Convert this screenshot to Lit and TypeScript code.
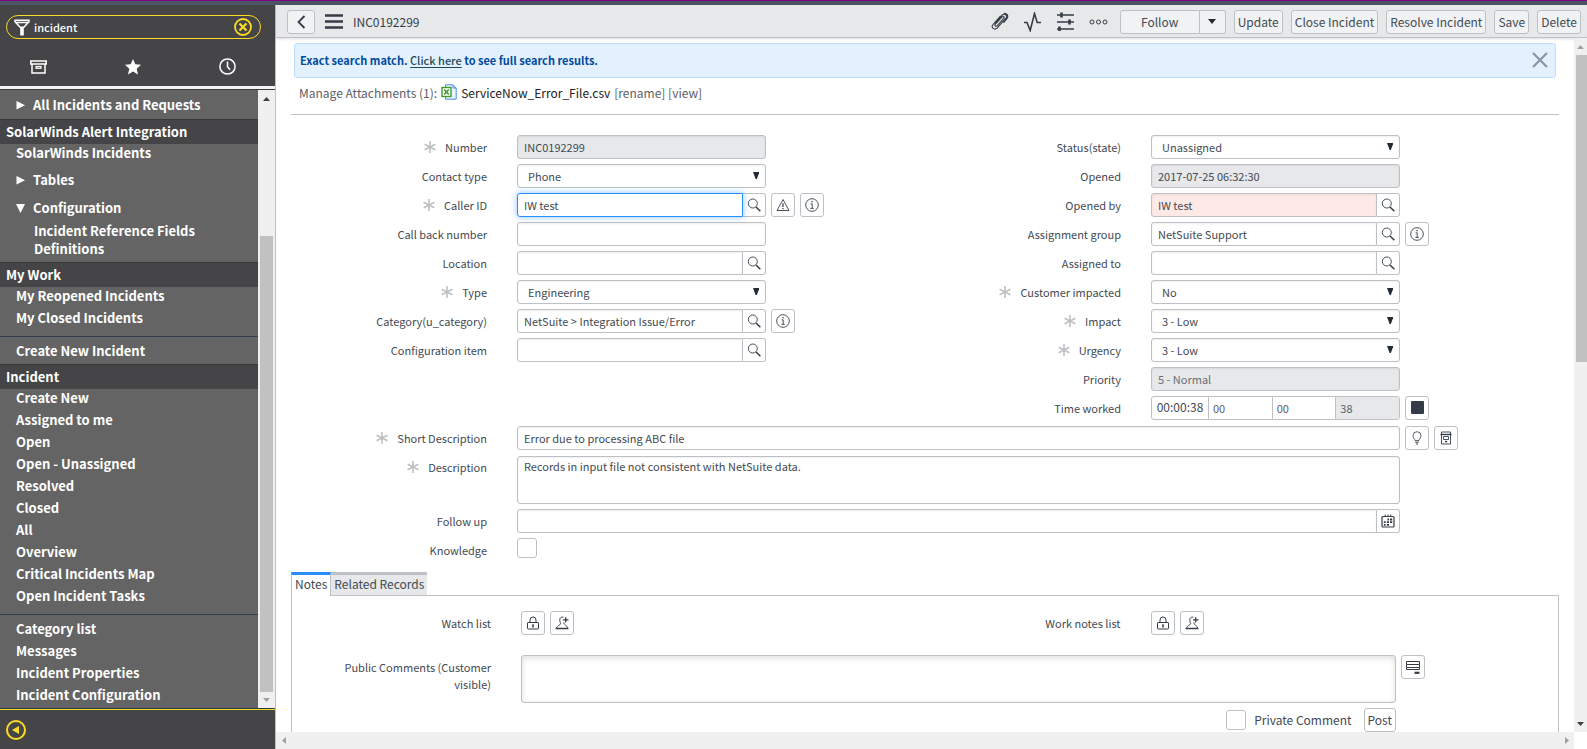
import { LitElement, html, css, svg, nothing, TemplateResult } from "lit";
import { customElement } from "lit/decorators.js";
import { classMap } from "lit/directives/class-map.js";

const base = css`
  *, *::before, *::after { box-sizing: border-box; }
  button, input, select, textarea { font: inherit; color: inherit; margin: 0; }
  svg { display: block; flex: none; }
  a { color: inherit; text-decoration: none; }
`;

const icon = (w: number, h: number, body: TemplateResult) => html`
  <svg width=${w} height=${h} viewBox="0 0 ${w} ${h}" fill="none" stroke="currentColor" aria-hidden="true">${body}</svg>`;

const icons: Record<string, () => TemplateResult> = {
  search: () => icon(14, 14, svg`<circle cx="5.800" cy="5.500" r="4.500" stroke-width=".9"/><path d="M9 9l4.400 4.200" stroke-width="1.500"/>`),
  info: () => icon(14, 14, svg`<circle cx="7" cy="7" r="6.300" stroke-width=".9"/><path d="M5.600 5.800h1.600v4.400M5.400 10.400h3.400" stroke-width=".9"/><path d="M6.400 3.600h1.300" stroke-width="1.400"/>`),
  warn: () => icon(14, 14, svg`<path d="M7 1.500L13 12.500H1z" stroke-width=".9"/><path d="M7 5.200v3.800M7 9.900v1.300" stroke-width="1.200"/>`),
  stop: () => icon(14, 14, svg`<rect x="1" y="0" width="13" height="13" rx="1" fill="currentColor" stroke="none"/>`),
  bulb: () => icon(14, 14, svg`<path d="M5 9.500C5 8 3 6.900 3 4.700a4 4 0 0 1 8 0C11 6.900 9 8 9 9.500z" stroke-width=".8"/><path d="M5.200 11.200h3.600M6 13h2"/>`),
  kb: () => icon(14, 14, svg`<path d="M2.500 1h9v2.500h-9zM2.500 4v9h9v-9" stroke-width=".9"/><path d="M1.500 3.500h11" stroke-width="1.400"/><path d="M4.500 5.500h5v3h-5z" stroke-width=".9"/><path d="M6 10.600h2.200" stroke-width="1.500"/>`),
  calendar: () => icon(14, 14, svg`<rect x="1" y="2.500" width="12" height="10.500" rx="1" stroke-width="1.200"/><path d="M4.200 .5v2.500M7 .5v2.500M9.800 .5v2.500"/><path d="M6.500 5.500h1.600M9 5.500h2.200M2.800 8.200h1.800M5.800 8.200h2.200M9 8.200h2.200M2.800 10.800h1.800M5.800 10.800h2.200" stroke-width="1.800"/>`),
  lock: () => icon(14, 14, svg`<rect x="1.500" y="6.500" width="11" height="6.500" rx=".6"/><path d="M4 6.300V4a3 3 0 0 1 6 0v2.300"/><path d="M7 8.200v3.200" stroke-width="1.600"/>`),
  adduser: () => icon(14, 14, svg`<path d="M8.500 1.200C6.200 .6 4.600 2 4.700 4.200c.1 1.600.9 2.600 1 3.600 0 1.200-4 1.600-4.400 4.700" stroke-width=".9"/><path d="M8.700 6.500c.1 2.600 3.700 2.700 4.100 6" stroke-width=".9"/><path d="M.6 12.500h12.800" stroke-width="1.500"/><path d="M10.700 1.300v5.200M8 3.900h5.500" stroke-width="1.300"/>`),
  template: () => icon(14, 14, svg`<path d="M.5 1.500h13v3H.5zM.5 7.500h13v2H.5zM.5 4.500v3M13.500 4.500v3"/><path d="M8.500 12.800h5" stroke-width="2.200"/>`),
};

const star = icon(12, 12, svg`<path d="M6 0v12M.6 3.200l10.800 5.600M.6 8.800l10.800-5.600" stroke-width="1.600"/>`);

type Row = { head?: string; group?: string; open?: boolean; item?: string; nested?: boolean; rule?: boolean };

const NAV: Row[] = [
  { group: "All Incidents and Requests" },
  { head: "SolarWinds Alert Integration" },
  { item: "SolarWinds Incidents" },
  { group: "Tables" },
  { group: "Configuration", open: true },
  { item: "Incident Reference Fields Definitions", nested: true },
  { head: "My Work" },
  { item: "My Reopened Incidents" },
  { item: "My Closed Incidents" },
  { rule: true },
  { item: "Create New Incident" },
  { head: "Incident" },
  ...["Create New", "Assigned to me", "Open", "Open - Unassigned", "Resolved", "Closed", "All",
    "Overview", "Critical Incidents Map", "Open Incident Tasks"].map((item) => ({ item })),
  { rule: true },
  ...["Category list", "Messages", "Incident Properties", "Incident Configuration"].map((item) => ({ item })),
];

@customElement("app-nav")
class AppNav extends LitElement {
  static styles = [base, css`
    :host {
      display: flex; flex-direction: column; width: 275px; flex: none; min-height: 0;
      background: #454547; color: #fff; font-weight: 700; font-size: 13px;
    }
    .top { height: 81px; padding: 10px 14px 0 6px; }
    .filter {
      display: flex; align-items: center; height: 24px; padding: 0 8px 0 7px; gap: 4px;
      border: 1px solid #fddc26; border-radius: 12px;
    }
    .filter input {
      flex: 1; min-width: 0; border: 0; padding: 0; outline: 0; background: none;
      font-size: 11px; font-weight: 500; line-height: 20px;
    }
    .plain { border: 0; padding: 0; background: none; color: inherit; cursor: pointer; }
    .clear, .collapse { color: #fddc26; }
    .views { display: flex; justify-content: space-between; align-items: center; padding: 19px 25px 0 24px; }
    .band { height: 4px; background: #f4f4f4; border-bottom: 1px solid #38383a; }
    .body { display: flex; flex: 1; min-height: 0; border-bottom: 1px solid #343d47; }
    .list { flex: 1; overflow: hidden; background: #646464; padding-top: 1px; }
    .head {
      height: 25px; padding-left: 6px; line-height: 23px; font-size: 13px; font-weight: 700;
      background: #454547; border-top: 1px solid #38383a; margin: 0;
    }
    .item { display: block; padding: 0 50px 4px 16px; line-height: 18px; }
    .nested { padding-left: 34px; }
    .group {
      display: flex; align-items: center; gap: 8px; width: 100%; height: 28px; padding: 0 0 1px 16px;
      border: 0; background: none; color: inherit; text-align: left; font-weight: 700;
    }
    .rule { height: 11px; border: 0; margin: 0; padding: 5px 0; }
    .rule::before { content: ""; display: block; height: 1px; background: #343d4f; }
    .bar { width: 17px; background: #f0f0f0; display: flex; flex-direction: column; align-items: center; padding: 7px 0 6px; }
    .gap { flex: 135; }
    .thumb { width: 13px; flex: 456; background: #c1c1c1; margin-bottom: 6px; }
    .foot { height: 40px; border-top: 1px solid #fddc26; padding: 10px 6px; }
  `];

  row(r: Row) {
    if (r.rule) return html`<hr class="rule">`;
    if (r.head) return html`<h2 class="head">${r.head}</h2>`;
    if (r.group) return html`<button class="group" aria-expanded=${r.open ? "true" : "false"}>
      ${icon(9, 10, r.open
        ? svg`<path d="M0 1h9L4.500 10z" fill="currentColor" stroke="none"/>`
        : svg`<path d="M.5 1L9 5.200.5 9.500z" fill="currentColor" stroke="none"/>`)}
      <span>${r.group}</span></button>`;
    return html`<a href="#" class=${classMap({ item: true, nested: !!r.nested })}>${r.item}</a>`;
  }

  render() {
    return html`
      <div class="top">
        <div class="filter">
          ${icon(16, 17, svg`<path d="M1 1.200h14v1.600L9.800 8.200H6.200L1 2.800zM1.500 3.500h13" stroke-width="1.500"/><path d="M8 9v7.500" stroke-width="3.600"/>`)}
          <input aria-label="Filter navigator" .value=${"incident"}>
          <button class="plain clear" aria-label="Clear filter">
            ${icon(18, 18, svg`<circle cx="9" cy="9" r="8" stroke-width="1.800"/><path d="M5.500 5.500l7 7M12.500 5.500l-7 7" stroke-width="2.200"/>`)}
          </button>
        </div>
        <div class="views">
          <button class="plain" aria-label="All applications">
            ${icon(17, 14, svg`<path d="M.8 1h15.400v3H.8zM2 4v9h13V4" stroke-width="1.500"/><rect x="6" y="6.500" width="5" height="1.800" stroke-width="1.200"/>`)}
          </button>
          <button class="plain" aria-label="Favorites">
            ${icon(16, 16, svg`<path d="M8 0l2.300 5.300 5.700.5-4.300 3.900 1.300 5.800L8 12.500l-5 3 1.300-5.800L0 5.800l5.700-.5z" fill="currentColor" stroke="none"/>`)}
          </button>
          <button class="plain" aria-label="History">
            ${icon(17, 17, svg`<circle cx="8.500" cy="8.500" r="7.600" stroke-width="1.500"/><path d="M8.500 3.500v5.200l2.600 3" stroke-width="1.500"/>`)}
          </button>
        </div>
      </div>
      <div class="band"></div>
      <div class="body">
        <nav class="list">${NAV.map((r) => this.row(r))}</nav>
        <div class="bar">
          ${icon(7, 4, svg`<path d="M0 4h7L3.500 0z" fill="#404040" stroke="none"/>`)}
          <div class="gap"></div><div class="thumb"></div>
          ${icon(7, 4, svg`<path d="M0 0h7L3.500 4z" fill="#a0a0a0" stroke="none"/>`)}
        </div>
      </div>
      <div class="foot">
        <button class="plain collapse" aria-label="Collapse navigator">
          ${icon(20, 20, svg`<circle cx="10" cy="10" r="9" stroke-width="2"/><path d="M6 10l7-4v8z" fill="currentColor" stroke="none"/>`)}
        </button>
      </div>`;
  }
}

type Field = {
  id: string; label: string; value?: string; kind?: "text" | "select" | "ref" | "timer" | "area" | "date" | "check";
  req?: boolean; ro?: boolean; tone?: string; extra?: string[];
};

const LEFT: Field[] = [
  { id: "number", label: "Number", value: "INC0192299", ro: true, req: true },
  { id: "contact", label: "Contact type", value: "Phone", kind: "select" },
  { id: "caller", label: "Caller ID", value: "IW test", kind: "ref", req: true, tone: "focus", extra: ["warn", "info"] },
  { id: "callback", label: "Call back number" },
  { id: "location", label: "Location", kind: "ref" },
  { id: "type", label: "Type", value: "Engineering", kind: "select", req: true },
  { id: "category", label: "Category(u_category)", value: "NetSuite > Integration Issue/Error", kind: "ref", extra: ["info"] },
  { id: "ci", label: "Configuration item", kind: "ref" },
];

const RIGHT: Field[] = [
  { id: "state", label: "Status(state)", value: "Unassigned", kind: "select" },
  { id: "opened", label: "Opened", value: "2017-07-25 06:32:30", ro: true },
  { id: "openedby", label: "Opened by", value: "IW test", kind: "ref", tone: "pink" },
  { id: "group", label: "Assignment group", value: "NetSuite Support", kind: "ref", extra: ["info"] },
  { id: "assigned", label: "Assigned to", kind: "ref" },
  { id: "impacted", label: "Customer impacted", value: "No", kind: "select", req: true },
  { id: "impact", label: "Impact", value: "3 - Low", kind: "select", req: true },
  { id: "urgency", label: "Urgency", value: "3 - Low", kind: "select", req: true },
  { id: "priority", label: "Priority", value: "5 - Normal", ro: true, tone: "dim" },
  { id: "time", label: "Time worked", kind: "timer", extra: ["stop"] },
];

const WIDE: Field[] = [
  { id: "short", label: "Short Description", value: "Error due to processing ABC file", req: true, extra: ["bulb", "kb"] },
  { id: "desc", label: "Description", value: "Records in input file not consistent with NetSuite data.", kind: "area", req: true },
  { id: "follow", label: "Follow up", kind: "date" },
  { id: "knowledge", label: "Knowledge", kind: "check" },
];

@customElement("app-record")
class AppRecord extends LitElement {
  static styles = [base, css`
    :host {
      display: flex; flex-direction: column; flex: 1; min-width: 0; min-height: 0;
      border-left: 1px solid #bdc0c4; background: #fff; color: #434a52; font-size: 11px;
    }
    .bar {
      display: flex; align-items: center; height: 33px; padding: 1px 6px 0 11px; flex: none;
      background: #e6e8ea; border-bottom: 1px solid #bdc0c4; box-shadow: 0 1px 3px #0002; color: #343d47;
    }
    .btn {
      height: 24px; padding: 0 3px; border: 1px solid #bdc0c4; border-radius: 3px;
      background: #f0f2f3; color: #434a52; font-size: 12px; line-height: 20px; white-space: nowrap;
    }
    .back { width: 28px; display: grid; place-items: center; color: #343d47; }
    .menu { margin: 0 10px; }
    .title { font-size: 12px; font-weight: 400; line-height: 20px; margin: 0; flex: 1; }
    .tools { display: flex; gap: 14px; align-items: center; margin-right: 12px; }
    .tool { border: 0; background: none; padding: 0; color: #343d47; }
    .actions { display: flex; gap: 8px; }
    .split { display: flex; }
    .follow { width: 80px; border-radius: 3px 0 0 3px; }
    .drop { width: 26px; border-left: 0; border-radius: 0 3px 3px 0; display: grid; place-items: center; }
    .scroll { display: grid; grid-template: minmax(0, 1fr) 17px / minmax(0, 1fr) 13px; flex: 1; min-height: 0; }
    .page { overflow: hidden; padding: 5px 15px 0; }
    .alert {
      display: flex; justify-content: space-between; align-items: center; height: 35px; margin: 0 3px;
      padding: 0 7px 2px 5px; border: 1px solid #bedcff; border-radius: 3px; background: #e3f1ff;
      color: #004b9c; font-weight: 700;
    }
    .alert a { color: #1f4a57; text-decoration: underline; text-underline-offset: 2px; font-weight: 500; }
    .close { border: 0; background: none; padding: 0; color: #8994a0; }
    .files {
      display: flex; align-items: center; gap: 4px; height: 37px; padding: 0 8px 8px; font-size: 12px;
      border-bottom: 1px solid #bdc0c9; color: #5c6066;
    }
    .files .name { color: #222; }
    .form { padding-top: 20px; }
    .cols { display: grid; grid-template-columns: 1fr 1fr; }
    .col { display: grid; gap: 5px; align-content: start; }
    .wide { display: grid; gap: 5px; padding-top: 6px; }
    .row { display: grid; grid-template-columns: 196px minmax(0, 1fr) 159px; min-height: 24px; }
    .row > label, .row > .label {
      display: flex; justify-content: flex-end; align-items: center; gap: 9px; height: 24px; text-align: right;
    }
    .row > label > svg { color: #bdc0c4; }
    .ctl { display: flex; margin-left: 30px; }
    .extra { display: flex; gap: 5px; padding-left: 5px; }
    .in {
      flex: 1; min-width: 0; width: 100%; height: 24px; padding: 0 6px; border: 1px solid #bdc0c4; border-radius: 3px;
      background: #fff; box-shadow: inset 0 1px 2px #0001; outline: 0; line-height: 20px;
    }
    .in.ro { background: #e6e8ea; }
    .in.dim { color: #6b7078; }
    .in.ref { border-radius: 3px 0 0 3px; }
    .in.focus { border-color: #278efc; box-shadow: 0 0 6px #278efc88; position: relative; border-radius: 3px 0 0 3px; }
    .in.pink { background: #ffe9e7; }
    select.in { appearance: none; padding: 0 10px; grid-area: 1 / 1; }
    .pick { display: grid; flex: 1; min-width: 0; align-items: center; }
    .pick svg { grid-area: 1 / 1; justify-self: end; margin: 0 7px 2px 0; color: #222b34; pointer-events: none; }
    textarea.in { height: 48px; display: block; resize: none; padding: 0 6px; line-height: 18px; }
    .wide textarea { margin-top: 1px; }
    .sq {
      width: 24px; height: 24px; flex: none; display: grid; place-items: center; padding: 0;
      border: 1px solid #bdc0c4; border-radius: 3px; background: #fff; color: #343d47;
    }
    .sq.join { border-left: 0; border-radius: 0 3px 3px 0; width: 23px; }
    .timer { display: flex; flex: 1; min-width: 0; height: 24px; border: 1px solid #bdc0c4; border-radius: 3px; overflow: hidden; }
    .clock { width: 56px; text-align: center; line-height: 20px; flex: none; font-size: 12px; }
    .timer input {
      flex: 1; min-width: 0; border: 0; border-left: 1px solid #bdc0c4; border-radius: 0; outline: 0;
      padding: 0 4px; line-height: 20px; color: #5c6066; background: #fff;
    }
    .timer input[readonly] { background: #e6e8ea; }
    .check {
      appearance: none; width: 20px; height: 20px; margin: 0; border: 1px solid #bdc0c4; border-radius: 3px; background: #fff;
    }
    .tabs { display: flex; padding-top: 10px; height: 33px; font-size: 12px; }
    .tab {
      border: 0; padding: 0 3px; line-height: 18px; background: #e6e8ea; border-top: 3px solid #bdc0c9;
      height: 23px; white-space: nowrap; display: flex; align-items: flex-start;
    }
    .tab.on {
      background: #fff; border-top-color: #278efc; border-left: 1px solid #bdc0c4; border-right: 1px solid #bdc0c4;
      height: 24px; position: relative;
    }
    .pane { border: 1px solid #bdc0c4; padding: 15px 3px 40px 4px; height: 260px; }
    .pane .row { grid-template-columns: 195px minmax(0, 1fr) 159px; }
    .pair { display: flex; gap: 5px; margin-left: 30px; }
    .comments { margin-top: 20px; }
    .row > label.long { display: block; height: auto; padding: 4px 0 0 36px; line-height: 17px; }
    .comments .in { box-shadow: inset 0 2px 6px #0002; }
    .post { display: flex; justify-content: flex-end; align-items: center; gap: 8px; padding: 5px 159px 0 0; font-size: 12px; }
    .post label { line-height: 20px; margin-right: 4px; }
    .post .btn { background: #fff; }
    .vbar { background: #f0f0f0; display: flex; flex-direction: column; align-items: center; padding: 7px 0 6px; }
    .thumb { align-self: stretch; margin: 6px 0 0 2px; background: #c1c1c1; flex: 306; }
    .rest { flex: 358; }
    .hbar { background: #f0f0f0; display: flex; justify-content: space-between; align-items: center; padding: 0 5px 0 6px; }
  `];

  button(name: string, label: string, cls = "sq") {
    return html`<button class=${cls} aria-label=${label}>${icons[name]()}</button>`;
  }

  control(f: Field) {
    const v = f.value ?? "";
    if (f.kind === "select") return html`<div class="pick">
      <select class="in" id=${f.id}><option>${v}</option></select>
      ${icon(6, 7, svg`<path d="M0 0h6.500L3.800 7H2.600z" fill="currentColor" stroke="none"/>`)}</div>`;
    if (f.kind === "area") return html`<textarea class="in" id=${f.id} .value=${v}></textarea>`;
    if (f.kind === "check") return html`<input class="check" type="checkbox" id=${f.id}>`;
    if (f.kind === "timer") return html`<div class="timer">
      <span class="clock">00:00:38</span>
      <input id=${f.id} aria-label="Hours" .value=${"00"}>
      <input aria-label="Minutes" .value=${"00"}>
      <input aria-label="Seconds" readonly .value=${"38"}></div>`;
    const joined = f.kind === "ref" || f.kind === "date";
    return html`
      <input id=${f.id} ?readonly=${!!f.ro} .value=${v}
        class=${classMap({ in: true, ro: !!f.ro, ref: joined, focus: f.tone === "focus", pink: f.tone === "pink", dim: f.tone === "dim" })}>
      ${joined ? this.button(f.kind === "date" ? "calendar" : "search", `Look up ${f.label}`, "sq join") : nothing}`;
  }

  field(f: Field) {
    return html`<div class="row">
      <label for=${f.id}>${f.req ? star : nothing}<span>${f.label}</span></label>
      <div class="ctl">${this.control(f)}</div>
      <div class="extra">${(f.extra ?? []).map((e) => this.button(e, `${f.label} ${e}`))}</div>
    </div>`;
  }

  people(label: string) {
    return html`<div class="row"><span class="label">${label}</span>
      <div class="pair">${this.button("lock", `Unlock ${label}`)}${this.button("adduser", `Add me to ${label}`)}</div></div>`;
  }

  render() {
    return html`
      <header class="bar">
        <button class="btn back" aria-label="Back">${icon(9, 14, svg`<path d="M7.500 1L1.500 7l6 6" stroke-width="1.800"/>`)}</button>
        <button class="tool menu" aria-label="Menu">${icon(18, 15, svg`<path d="M0 1.500h18M0 7.500h18M0 13.500h18" stroke-width="2.600"/>`)}</button>
        <h1 class="title">INC0192299</h1>
        <div class="tools">
          <button class="tool" aria-label="Attachments">${icon(19, 19, svg`<path d="M5 12.600L12 5c1.200-1.200 2.800 0 1.700 1.400l-6.600 7.500M4.600 11.400L12.400 3c2.200-2.200 5.600.4 3.500 3.100l-8.600 9.700c-2.900 2.900-6.700-.2-4.300-3.300l7.600-8.700M5 12.600c-.6 1.300 1 2.200 2.100 1.300M14 1.300c2.600-.3 4.800 2.300 3.200 4.900l-3.700 4.600" stroke-width="1.100"/>`)}</button>
          <button class="tool" aria-label="Activity">${icon(19, 20, svg`<path d="M1 10.500h3l3.200 8L11.500 1.500l2.700 9H18" stroke-width="1.600"/>`)}</button>
          <button class="tool" aria-label="Personalize">${icon(19, 19, svg`<path d="M1 3h17M1 10h17M1 17h17" stroke-width="1.500"/><path d="M5.500 .5v5M13.500 7.500v5M3.500 14.500v5" stroke-width="2.600"/>`)}</button>
          <button class="tool" aria-label="More">${icon(19, 6, svg`<circle cx="3" cy="3" r="2"/><circle cx="9.500" cy="3" r="2"/><circle cx="16" cy="3" r="2"/>`)}</button>
        </div>
        <div class="actions">
          <div class="split"><button class="btn follow">Follow</button>
            <button class="btn drop" aria-label="Follow options">${icon(8, 5, svg`<path d="M0 0h8L4 5z" fill="#222b34" stroke="none"/>`)}</button></div>
          ${["Update", "Close Incident", "Resolve Incident", "Save", "Delete"].map((t) => html`<button class="btn">${t}</button>`)}
        </div>
      </header>
      <div class="scroll">
        <main class="page">
          <div class="alert">
            <span>Exact search match. <a href="#">Click here</a> to see full search results.</span>
            <button class="close" aria-label="Dismiss">${icon(16, 16, svg`<path d="M1 1l14 14M15 1L1 15" stroke-width="2.200"/>`)}</button>
          </div>
          <div class="files">
            <span>Manage Attachments (1):</span>
            ${icon(16, 16, svg`<path d="M4.500 3V.8h7.500l3.200 3.200v11.200H4.500V13" stroke="#4a8be0" fill="#eef4fc"/><path d="M12 1v3h3" stroke="#4a8be0"/><rect x="1" y="3.500" width="9" height="9" fill="#fff" stroke="#3f9a2f" stroke-width="1.400"/><path d="M3.200 5.500l4.600 5M7.800 5.500l-4.600 5" stroke="#3f9a2f" stroke-width="1.600"/>`)}
            <a class="name" href="#">ServiceNow_Error_File.csv</a>
            <span><a href="#">[rename]</a> <a href="#">[view]</a></span>
          </div>
          <form class="form" @submit=${(e: Event) => e.preventDefault()}>
            <div class="cols">
              <div class="col">${LEFT.map((f) => this.field(f))}</div>
              <div class="col">${RIGHT.map((f) => this.field(f))}</div>
            </div>
            <div class="wide">${WIDE.map((f) => this.field(f))}</div>
          </form>
          <div class="tabs" role="tablist">
            <button class="tab on" role="tab" aria-selected="true">Notes</button>
            <button class="tab" role="tab" aria-selected="false">Related Records</button>
          </div>
          <section class="pane">
            <div class="cols">${this.people("Watch list")}${this.people("Work notes list")}</div>
            <div class="row comments">
              <label class="long" for="comments">Public Comments (Customer visible)</label>
              <div class="ctl"><textarea class="in" id="comments"></textarea></div>
              <div class="extra">${this.button("template", "Comment templates")}</div>
            </div>
            <div class="post">
              <input class="check" type="checkbox" id="private"><label for="private">Private Comment</label>
              <button class="btn">Post</button>
            </div>
          </section>
        </main>
        <div class="vbar">
          ${icon(7, 4, svg`<path d="M0 4h7L3.500 0z" fill="#a0a0a0" stroke="none"/>`)}
          <div class="thumb"></div><div class="rest"></div>
          ${icon(7, 4, svg`<path d="M0 0h7L3.500 4z" fill="#404040" stroke="none"/>`)}
        </div>
        <div class="hbar">
          ${icon(4, 7, svg`<path d="M4 0v7L0 3.500z" fill="#a0a0a0" stroke="none"/>`)}
          ${icon(4, 7, svg`<path d="M0 0v7l4-3.500z" fill="#a0a0a0" stroke="none"/>`)}
        </div>
      </div>`;
  }
}

@customElement("app-root")
class AppRoot extends LitElement {
  static styles = css`
    :host {
      display: flex; flex-direction: column; height: 100vh; overflow: hidden;
      font-family: "Source Sans Pro", "Noto Sans CJK SC", "Noto Sans", sans-serif;
    }
    .strip { height: 5px; flex: none; box-sizing: border-box; background: #485563; border-top: 1px solid #800080; }
    .main { display: flex; flex: 1; min-height: 0; }
  `;
  render() {
    return html`<div class="strip"></div><div class="main"><app-nav></app-nav><app-record></app-record></div>`;
  }
}
